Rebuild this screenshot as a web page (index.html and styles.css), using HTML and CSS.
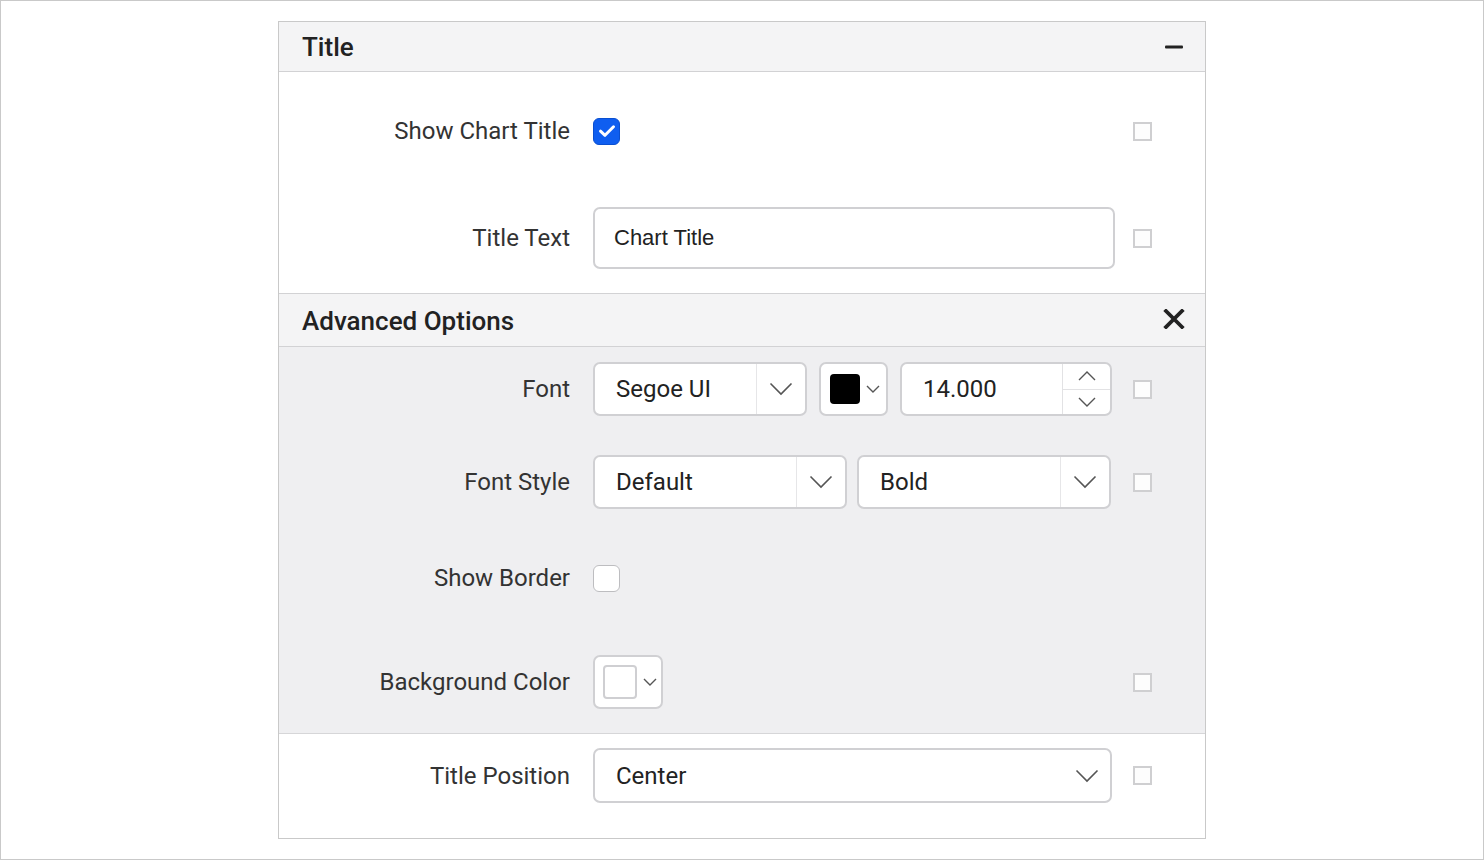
FILE: index.html
```html
<!DOCTYPE html>
<html lang="en">
<head>
    <meta charset="UTF-8">
    <title>Chart Title Properties</title>
    <link rel="stylesheet" href="styles.css">
</head>
<body>
    <div class="frame">
        <div class="panel">
            <!-- Title group -->
            <div class="group-head">
                <span>Title</span>
                <svg class="head-icon" width="20" height="4" viewBox="0 0 20 4"><rect x="1" y="0.5" width="18" height="3" rx="1" fill="#222"/></svg>
            </div>
            <div class="section section-title">
                <div class="row row-check">
                    <label class="label">Show Chart Title</label>
                    <div class="control">
                        <span class="check checked">
                            <svg width="18" height="14" viewBox="0 0 18 14"><path d="M2.5 7.2 L7 11.3 L15.5 2.8" fill="none" stroke="#fff" stroke-width="3" stroke-linecap="round" stroke-linejoin="round"/></svg>
                        </span>
                    </div>
                    <span class="mark"></span>
                </div>
                <div class="row row-input">
                    <label class="label">Title Text</label>
                    <div class="control">
                        <div class="textbox">Chart Title</div>
                    </div>
                    <span class="mark"></span>
                </div>
            </div>

            <!-- Advanced options -->
            <div class="group-head group-adv">
                <span>Advanced Options</span>
                <svg class="head-icon" width="22" height="20" viewBox="0 0 22 20"><path d="M3 2 L19 18 M19 2 L3 18" stroke="#222" stroke-width="3.8" stroke-linecap="square"/></svg>
            </div>
            <div class="section section-adv">
                <div class="row">
                    <label class="label">Font</label>
                    <div class="control">
                        <div class="dropdown w-font">
                            <span class="value">Segoe UI</span>
                            <span class="arrow"><svg width="24" height="14" viewBox="0 0 24 14"><path d="M1.5 1.5 L12 12 L22.5 1.5" fill="none" stroke="#555" stroke-width="1.6"/></svg></span>
                        </div>
                        <div class="picker">
                            <span class="swatch black"></span>
                            <svg width="14" height="8" viewBox="0 0 14 8"><path d="M1 1 L7 7 L13 1" fill="none" stroke="#555" stroke-width="1.4"/></svg>
                        </div>
                        <div class="numeric">
                            <span class="value">14.000</span>
                            <span class="spin">
                                <span><svg width="18" height="10" viewBox="0 0 18 10"><path d="M1 9 L9 1 L17 9" fill="none" stroke="#555" stroke-width="1.4"/></svg></span>
                                <span><svg width="18" height="10" viewBox="0 0 18 10"><path d="M1 1 L9 9 L17 1" fill="none" stroke="#555" stroke-width="1.4"/></svg></span>
                            </span>
                        </div>
                    </div>
                    <span class="mark"></span>
                </div>
                <div class="row">
                    <label class="label">Font Style</label>
                    <div class="control">
                        <div class="dropdown w-half">
                            <span class="value">Default</span>
                            <span class="arrow"><svg width="24" height="14" viewBox="0 0 24 14"><path d="M1.5 1.5 L12 12 L22.5 1.5" fill="none" stroke="#555" stroke-width="1.6"/></svg></span>
                        </div>
                        <div class="dropdown w-half">
                            <span class="value">Bold</span>
                            <span class="arrow"><svg width="24" height="14" viewBox="0 0 24 14"><path d="M1.5 1.5 L12 12 L22.5 1.5" fill="none" stroke="#555" stroke-width="1.6"/></svg></span>
                        </div>
                    </div>
                    <span class="mark"></span>
                </div>
                <div class="row row-border">
                    <label class="label">Show Border</label>
                    <div class="control">
                        <span class="check"></span>
                    </div>
                </div>
                <div class="row row-bg">
                    <label class="label">Background Color</label>
                    <div class="control">
                        <div class="picker picker-bg">
                            <span class="swatch white"></span>
                            <svg width="14" height="8" viewBox="0 0 14 8"><path d="M1 1 L7 7 L13 1" fill="none" stroke="#555" stroke-width="1.4"/></svg>
                        </div>
                    </div>
                    <span class="mark"></span>
                </div>
            </div>

            <div class="section section-pos">
                <div class="row row-pos">
                    <label class="label">Title Position</label>
                    <div class="control">
                        <div class="dropdown w-full">
                            <span class="value">Center</span>
                            <span class="arrow plain"><svg width="24" height="14" viewBox="0 0 24 14"><path d="M1.5 1.5 L12 12 L22.5 1.5" fill="none" stroke="#555" stroke-width="1.6"/></svg></span>
                        </div>
                    </div>
                    <span class="mark"></span>
                </div>
            </div>
        </div>
    </div>
</body>
</html>
```

FILE: styles.css
```css
body {
    margin: 0;
    background: #fff;
    font-family: 'Roboto', 'Liberation Sans', Arial, sans-serif;
    color: #333;
}
.frame {
    width: 1484px;
    height: 860px;
    box-sizing: border-box;
    border: 1px solid #c9c9c9;
    padding: 20px 0 0 277px;
}
.panel {
    width: 928px;
    box-sizing: border-box;
    border: 1px solid #c9c9c9;
    background: #fff;
}
.group-head {
    height: 49px;
    display: flex;
    align-items: center;
    justify-content: space-between;
    padding: 0 21px 0 23px;
    background: #f4f4f5;
    border-bottom: 1px solid #d2d2d4;
    font-size: 26px;
    font-weight: 500;
    color: #222;
}
.group-head span {
    margin-top: 1px;
}
.group-adv {
    height: 52px;
    border-top: 1px solid #d2d2d4;
    padding-right: 20px;
}
.group-adv .head-icon {
    margin-top: -2px;
}
.section {
    display: flex;
    flex-direction: column;
}
.section-title {
    padding: 32px 0 24px;
    gap: 49px;
}
.section-adv {
    background: #efeff1;
    padding: 15px 0 24px;
    gap: 39px;
}
.section-pos {
    padding: 14px 0 35px;
    border-top: 1px solid #d6d6d8;
}
.row {
    display: flex;
    align-items: center;
    height: 54px;
}
.row-input {
    height: 62px;
}
.row-border {
    margin-top: 3px;
}
.row-bg {
    margin-top: 11px;
}
.row-pos {
    height: 55px;
}
.label {
    width: 291px;
    margin-right: 23px;
    text-align: right;
    font-size: 24px;
    color: #333;
}
.control {
    width: 522px;
    height: 100%;
    display: flex;
    align-items: center;
}
.mark {
    width: 15px;
    height: 15px;
    margin-left: 18px;
    border: 2px solid #cfcfd1;
    background: #fdfdfd;
}
.check {
    width: 25px;
    height: 25px;
    border: 1px solid #bdbdc0;
    border-radius: 6px;
    background: #fff;
    display: flex;
    align-items: center;
    justify-content: center;
}
.check.checked {
    background: #0f5ef0;
    border-color: #0a4fd1;
}
.textbox {
    width: 100%;
    height: 100%;
    box-sizing: border-box;
    border: 2px solid #d0d0d3;
    border-radius: 7px;
    background: #fff;
    padding-left: 19px;
    display: flex;
    align-items: center;
    font-family: 'Liberation Sans', Arial, sans-serif;
    font-size: 22px;
    color: #222;
}
.dropdown,
.numeric,
.picker {
    height: 100%;
    box-sizing: border-box;
    border: 2px solid #d0d0d3;
    border-radius: 7px;
    background: #fff;
    display: flex;
    align-items: stretch;
}
.value {
    flex: 1;
    display: flex;
    align-items: center;
    padding-left: 21px;
    font-size: 24px;
    color: #222;
}
.arrow {
    width: 48px;
    border-left: 1px solid #e6e6e8;
    display: flex;
    align-items: center;
    justify-content: center;
}
.arrow.plain {
    border-left: none;
    width: 46px;
}
.w-font {
    width: 214px;
}
.w-half {
    width: 254px;
}
.w-half + .w-half {
    margin-left: 10px;
}
.w-half + .w-half .value {
    padding-left: 21px;
}
.w-full {
    width: 519px;
}
.picker {
    width: 69px;
    margin-left: 12px;
    align-items: center;
    padding-left: 9px;
    gap: 6px;
}
.picker-bg {
    margin-left: 0;
    width: 70px;
    padding-left: 8px;
}
.swatch {
    width: 30px;
    height: 30px;
    box-sizing: border-box;
    border-radius: 4px;
}
.swatch.black {
    background: #000;
}
.swatch.white {
    width: 34px;
    height: 34px;
    background: #fff;
    border: 2px solid #cfcfd2;
}
.numeric {
    width: 212px;
    margin-left: 12px;
}
.spin {
    width: 47px;
    border-left: 1px solid #e2e2e4;
    display: flex;
    flex-direction: column;
}
.spin span {
    flex: 1;
    display: flex;
    align-items: center;
    justify-content: center;
}
.spin span + span {
    border-top: 1px solid #e2e2e4;
}
```
